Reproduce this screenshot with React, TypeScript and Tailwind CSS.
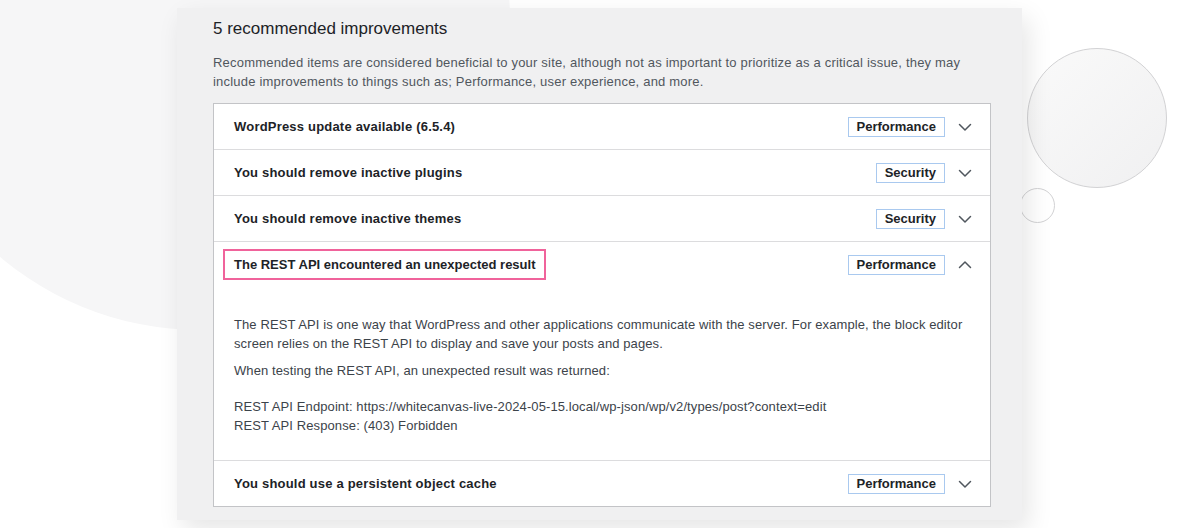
import type { ReactNode } from 'react';

type Issue = {
  title: string;
  badge: string;
  open?: boolean;
  highlight?: boolean;
  body?: ReactNode;
};

const issues: Issue[] = [
  { title: 'WordPress update available (6.5.4)', badge: 'Performance' },
  { title: 'You should remove inactive plugins', badge: 'Security' },
  { title: 'You should remove inactive themes', badge: 'Security' },
  {
    title: 'The REST API encountered an unexpected result',
    badge: 'Performance',
    open: true,
    highlight: true,
    body: (
      <>
        <p>
          The REST API is one way that WordPress and other applications communicate with the server. For example, the block editor
          screen relies on the REST API to display and save your posts and pages.
        </p>
        <p className="mt-[8px]">When testing the REST API, an unexpected result was returned:</p>
        <p className="mt-[17px]">
          REST API Endpoint: https://whitecanvas-live-2024-05-15.local/wp-json/wp/v2/types/post?context=edit
          <br />
          REST API Response: (403) Forbidden
        </p>
      </>
    ),
  },
  { title: 'You should use a persistent object cache', badge: 'Performance' },
];

function Chevron({ up }: { up?: boolean }) {
  return (
    <svg width="16" height="16" viewBox="0 0 16 16" fill="none" className="text-[#50575e]">
      <path
        d={up ? 'M2.5 10.5L8 5l5.5 5.5' : 'M2.5 5.5L8 11l5.5-5.5'}
        stroke="currentColor"
        strokeWidth="1.5"
        strokeLinecap="round"
        strokeLinejoin="round"
      />
    </svg>
  );
}

function IssueRow({ issue, last }: { issue: Issue; last: boolean }) {
  return (
    <div className={last ? '' : 'border-b border-[#dcdcde]'}>
      <div className="h-[45px] flex items-center pl-[20px] pr-[17px]">
        <div className="flex-1 min-w-0">
          <span
            className={
              issue.highlight
                ? 'inline-block -ml-[11px] px-[9px] py-[4px] border-2 border-[#f0639b] font-semibold'
                : 'font-semibold tracking-[0.2px]'
            }
          >
            {issue.title}
          </span>
        </div>
        <span className="h-[20px] flex items-center px-[8px] border border-[#a9c9ef] font-semibold text-[#1d2327]">
          {issue.badge}
        </span>
        <span className="ml-[12px]">
          <Chevron up={issue.open} />
        </span>
      </div>
      {issue.open && (
        <div className="pl-[20px] pr-[16px] pt-[28px] pb-[25px] text-[#3c434a] leading-[19px] font-normal tracking-[0.1px]">
          {issue.body}
        </div>
      )}
    </div>
  );
}

export default function App() {
  return (
    <div
      className="w-[1200px] h-[528px] relative overflow-hidden bg-white text-[13px] text-[#1d2327]"
      style={{ fontFamily: '"Liberation Sans", Arial, sans-serif' }}
    >
      {/* background decoration */}
      <div className="absolute w-[620px] h-[620px] rounded-full bg-[#f6f6f7] left-[-110px] top-[-290px]" />
      <div className="absolute w-[140px] h-[140px] rounded-full border border-[#d2d2d4] bg-gradient-to-br from-[#fafafa] to-[#f0f0f1] left-[1027px] top-[48px]" />
      <div className="absolute w-[35px] h-[35px] rounded-full border border-[#d2d2d4] left-[1020px] top-[188px]" />

      <div className="relative ml-[177px] mt-[8px] w-[845px] h-[512px] bg-[#f0f0f1] pl-[36px] pr-[31px] pt-[9px] shadow-[6px_10px_24px_rgba(0,0,0,0.10)]">
        <h3 className="text-[17px] leading-[24px] text-[#1d2327] font-normal">5 recommended improvements</h3>
        <p className="mt-[12px] text-[#50575e] leading-[19px] tracking-[0.2px]">
          Recommended items are considered beneficial to your site, although not as important to prioritize as a critical issue, they may
          include improvements to things such as; Performance, user experience, and more.
        </p>
        <div className="mt-[12px] bg-white border border-[#c3c4c7]">
          {issues.map((issue, i) => (
            <IssueRow key={issue.title} issue={issue} last={i === issues.length - 1} />
          ))}
        </div>
      </div>
    </div>
  );
}
